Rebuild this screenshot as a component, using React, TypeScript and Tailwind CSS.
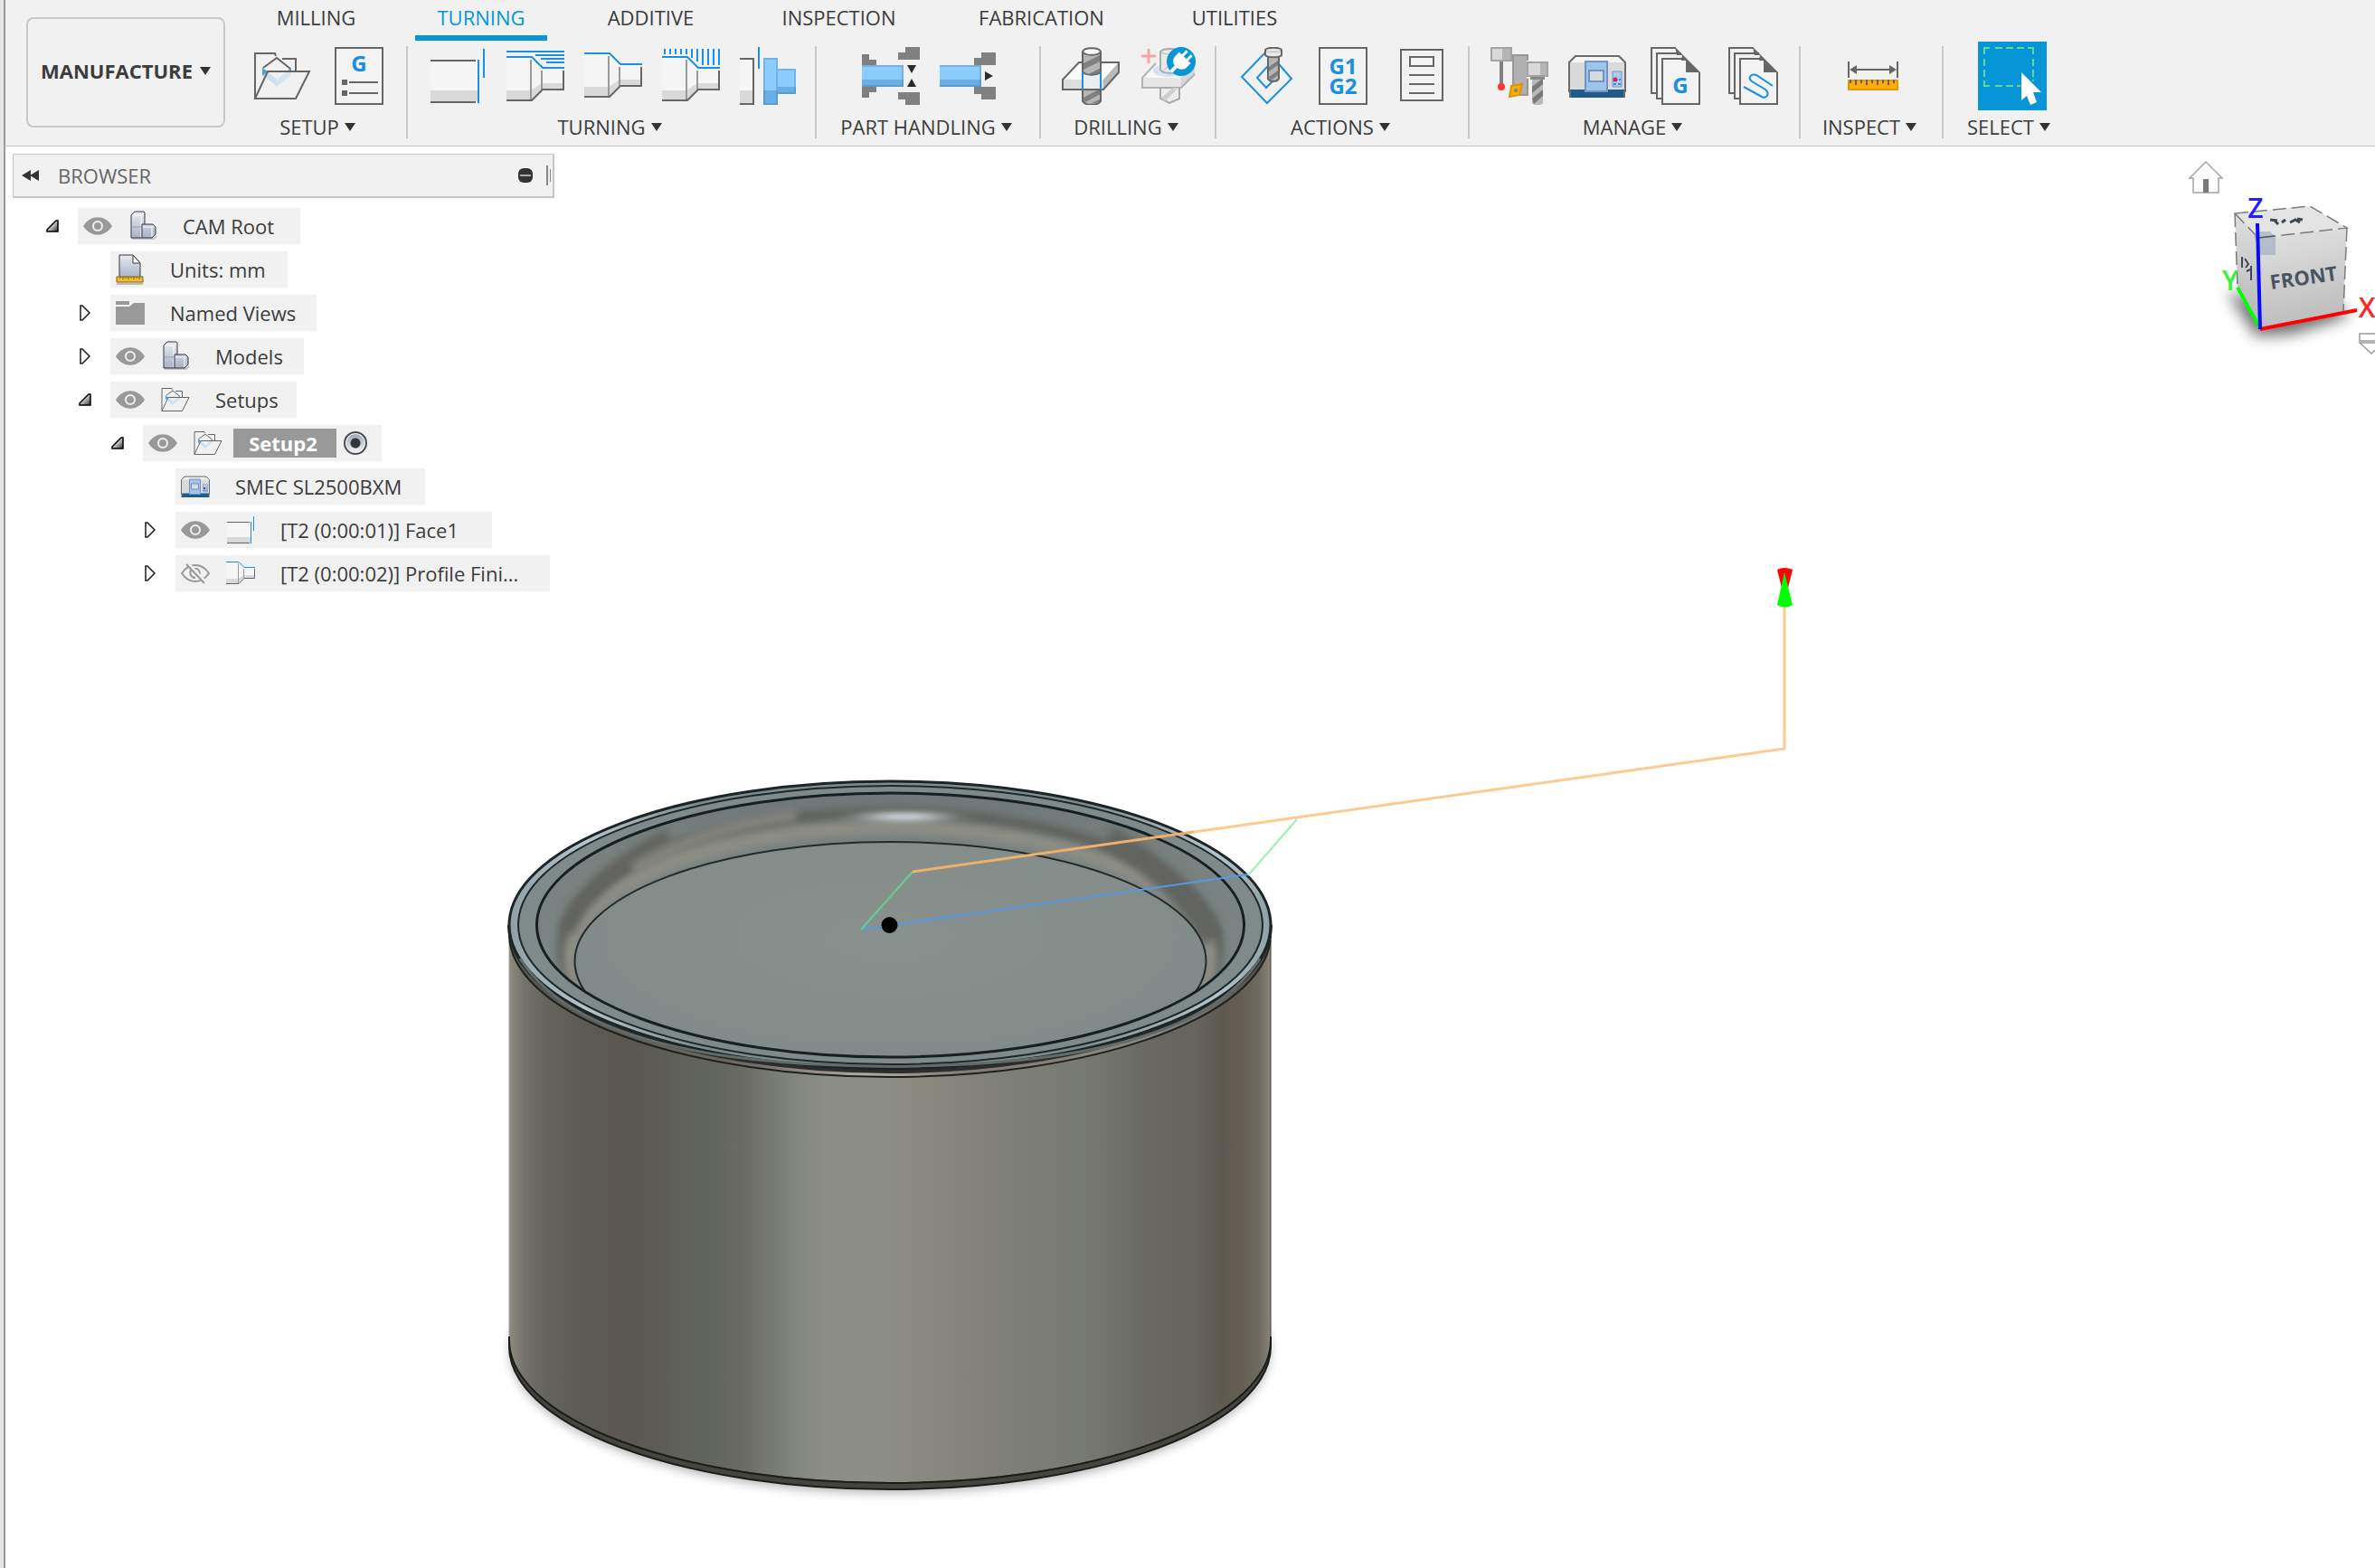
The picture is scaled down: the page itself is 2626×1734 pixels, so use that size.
import { ReactNode, useState } from 'react';
import clsx from 'clsx';

const tabs = [
  { name: 'MILLING', width: 'w-[135px]' },
  { name: 'TURNING', width: 'w-[146px]' },
  { name: 'ADDITIVE', width: 'w-[145px]' },
  { name: 'INSPECTION', width: 'w-[187px]' },
  { name: 'FABRICATION', width: 'w-[177px]' },
  { name: 'UTILITIES', width: 'w-[166px]' },
];

const LINE = '#666666';
const BLUE = '#1a8fe6';

function Icon({ children }: { children: ReactNode }) {
  return (
    <svg viewBox="0 0 64 64" className="size-full" fill="none" aria-hidden="true">
      {children}
    </svg>
  );
}

function SetupIcon() {
  return (
    <Icon>
      <path d="M10 23l6 4-3 6-3-2z" fill="#4a9fdc" />
      <path d="M37 27l5-4v5z" fill="#4a9fdc" />
      <path d="M11 31l5-4 10 9v8z" fill="#cde0f0" />
      <path d="M26 36l11-9h5v4L26 44z" fill="#d6e4f0" />
      <path
        d="M25 10l-1-3H2v50M32 13h15v14M11 23l15-11 15 12M16 27h46L47 57H2z"
        stroke={LINE}
        strokeWidth="2"
      />
    </Icon>
  );
}

function ProgramIcon() {
  return (
    <Icon>
      <rect x="5" y="1" width="52" height="62" fill="#f3f3f3" stroke={LINE} strokeWidth="2" />
      <text
        x="31"
        y="27"
        textAnchor="middle"
        fontSize="24"
        fontWeight="700"
        fontFamily="Open Sans"
        fill={BLUE}
      >
        G
      </text>
      <path d="M12 36h6v6h-6zM12 48h6v6h-6z" fill={LINE} />
      <path d="M20 39h32M20 51h32" stroke={LINE} strokeWidth="2" />
    </Icon>
  );
}

function FaceIcon() {
  return (
    <Icon>
      <path d="M2 15h52v33H2z" fill="#f5f5f5" />
      <path d="M2 48h52v12H2z" fill="#d9d9d9" />
      <path d="M2 15h50M2 61h50" stroke={LINE} strokeWidth="2" />
      <path d="M55 14v48M61 2v32" stroke={BLUE} strokeWidth="2" />
    </Icon>
  );
}

function ProfileShape() {
  return (
    <>
      <path d="M0 11h28l12 12h22v17H40l-12 8H0z" fill="#f5f5f5" />
      <path d="M0 48h27l12-8h23v6H40L28 58H0z" fill="#d9d9d9" />
      <path d="M27 14v44M39 26v21" stroke="#999999" strokeWidth="2" />
      <path d="M0 59h28l12-12h23V26" stroke={LINE} strokeWidth="2" />
      <path d="M0 11h28l12 12h24" stroke={BLUE} strokeWidth="2" />
    </>
  );
}

function RoughingIcon() {
  return (
    <Icon>
      <ProfileShape />
      <path d="M0 5h64M32 9h32M38 13h26M44 17h20" stroke={BLUE} strokeWidth="2" />
    </Icon>
  );
}

function FinishingIcon() {
  return (
    <Icon>
      <g transform="translate(0 -4)">
        <ProfileShape />
      </g>
    </Icon>
  );
}

function GrooveIcon() {
  return (
    <Icon>
      <ProfileShape />
      <path
        d="M3 2v6M9 2v6M15 2v6M21 2v6M27 2v6M33 2v10M39 2v14M45 2v18M51 2v18M57 2v18M63 2v18"
        stroke={BLUE}
        strokeWidth="2"
      />
    </Icon>
  );
}

function PartIcon() {
  return (
    <Icon>
      <path d="M0 13h15v35H0z" fill="#f5f5f5" />
      <path d="M0 48h15v14H0z" fill="#d9d9d9" />
      <path d="M0 13h15v50H0" stroke={LINE} strokeWidth="2" />
      <path d="M21 0v24" stroke={BLUE} strokeWidth="2" />
      <path d="M27 13h14v50H27zM41 25h20v26H41z" fill="#8accfc" stroke="#74b2e2" strokeWidth="2" />
      <path d="M27 48h14v15H27zM41 44h20v7H41z" fill="#69aee4" />
      <path d="M27 48v15h14V48M41 51h20v-7" stroke="#5a9dd1" strokeWidth="2" />
    </Icon>
  );
}

function StockBar() {
  return (
    <>
      <path d="M0 20h46v24H0z" fill="#8accfc" />
      <path d="M0 36h46v8H0z" fill="#69aee4" />
      <path d="M0 21h45v15" stroke="#74b2e2" strokeWidth="2" />
      <path d="M0 43h45v-7" stroke="#5a9dd1" strokeWidth="2" />
    </>
  );
}

function TransferIcon() {
  return (
    <Icon>
      <StockBar />
      <path
        d="M0 8h8v6h8v6H0zM0 44h16v6H8v6H0zM48 0h16v14H40V6h8zM40 50h24v14H48v-6h-8z"
        fill="#808080"
      />
      <path d="M50 20h10l-5 9zM50 44h10l-5-9z" fill="#2b2b2b" />
    </Icon>
  );
}

function BarPullIcon() {
  return (
    <Icon>
      <StockBar />
      <path d="M46 6h16v14H38v-8h8zM38 44h24v14H46v-6h-8z" fill="#808080" />
      <path d="M50 27v10l9-5z" fill="#2b2b2b" />
    </Icon>
  );
}

function DrillIcon() {
  return (
    <Icon>
      <path d="M1 36l18-19h44L46 36z" fill="#fafafa" />
      <path d="M1 36h45v11H1z" fill="#dddddd" />
      <path d="M46 36l17-19v11L46 47z" fill="#b9b9b9" />
      <path d="M1 36l18-19h44v11L46 47H1z" stroke={LINE} strokeWidth="2" />
      <path d="M24 28h19v19H24z" fill="#e9eef2" />
      <path d="M23 4v23c2 5 18 5 20 0V4z" fill="#b5b5b5" />
      <path d="M24 18l18-9v7l-18 9zM30 30l13-7v5l-5 3z" fill="#808080" />
      <ellipse cx="33" cy="5" rx="10" ry="4" fill="#fafafa" />
      <path d="M23 5v22c2 5 18 5 20 0V5c-2-5-18-5-20 0c2 5 18 5 20 0" stroke={LINE} strokeWidth="2" />
      <path d="M23 47v13c2 5 18 5 20 0V47z" fill="#b5b5b5" />
      <path d="M24 56l15-8h4v4L24 62zM32 63l11-6v4z" fill="#808080" />
      <path d="M23 47v13c2 5 18 5 20 0V47z" stroke={LINE} strokeWidth="2" />
      <path d="M23 28v19M43 28v19" stroke={BLUE} strokeWidth="2" />
    </Icon>
  );
}

function HoleRecognitionIcon() {
  return (
    <Icon>
      <path d="M2 10h16M10 2v16" stroke="#f2a5a8" strokeWidth="3" />
      <path d="M3 34l15-16h43L46 34z" fill="#f7f7f7" />
      <ellipse cx="31" cy="26" rx="16" ry="7" fill="#d3e3f5" />
      <path d="M3 34h43v11H3z" fill="#e6e6e6" />
      <path d="M46 34l15-16v12L46 45z" fill="#d5d5d5" />
      <path d="M18 18L3 34v11h43l15-15" stroke="#b0b3b6" strokeWidth="2" />
      <path d="M23 5v20c2 5 18 5 21 0V5c-2-4-18-4-21 0z" fill="#e9e9e9" stroke="#a8abae" strokeWidth="2" />
      <path d="M23 5c3 4 18 4 21 0M25 27l17-14" stroke="#b0b3b6" />
      <path d="M23 45v12l10 5 11-5V45z" fill="#ececec" stroke="#a8abae" strokeWidth="2" />
      <path d="M24 56l13-11h6L28 60z" fill="#cfcfcf" />
      <circle cx="46" cy="16" r="16" fill="#0696d7" />
      <g transform="rotate(45 46 16)" fill="#ffffff">
        <path d="M41 3h3v8h-3zM48 3h3v8h-3zM37 10h18v6c0 5-4 8-7 8v8h-4v-8c-3 0-7-3-7-8z" />
      </g>
    </Icon>
  );
}

function SimulateIcon() {
  return (
    <Icon>
      <path d="M33 4L5 33l28 29 27-27z" stroke={BLUE} strokeWidth="2" />
      <path d="M33 22L22 34l10 11 12-12z" stroke={BLUE} strokeWidth="2" />
      <path d="M34 10h12v25c-2 4-10 4-12 0z" fill="#b5b5b5" />
      <path d="M35 22l10-7v5l-10 7zM35 33l10-7v5l-8 6z" fill="#808080" />
      <path d="M34 10v25c2 4 10 4 12 0V10" stroke={LINE} strokeWidth="2" />
      <path d="M31 3c2-3 16-3 18 0v6c-2 3-16 3-18 0z" fill="#e8e8e8" stroke={LINE} strokeWidth="2" />
      <path d="M32 4c3 2 13 2 16 0" stroke="#b5b5b5" />
    </Icon>
  );
}

function PostProcessIcon() {
  return (
    <Icon>
      <rect x="5" y="1" width="52" height="62" fill="#f3f3f3" stroke={LINE} strokeWidth="2" />
      <text fontSize="24" fontWeight="700" fontFamily="Open Sans" fill={BLUE} textAnchor="middle">
        <tspan x="31" y="30">
          G1
        </tspan>
        <tspan x="31" y="52">
          G2
        </tspan>
      </text>
    </Icon>
  );
}

function SetupSheetIcon() {
  return (
    <Icon>
      <rect x="9" y="3" width="46" height="56" fill="#f3f3f3" stroke={LINE} strokeWidth="2" />
      <path d="M19 11h26v10H19zM18 31h28M18 41h28M18 51h28" stroke={LINE} strokeWidth="2" />
    </Icon>
  );
}

function ToolLibraryIcon() {
  return (
    <Icon>
      <path d="M25 9h16v44H25z" fill="#b0b0b0" stroke="#989898" strokeWidth="2" />
      <path d="M1 1h22v14H1z" fill="#d9d9d9" />
      <path d="M13 1h10v14H13z" fill="#b5b5b5" />
      <path d="M1 1h22v14H1z" stroke="#a3a3a3" strokeWidth="2" />
      <path d="M12 16v26" stroke="#808080" strokeWidth="4" />
      <circle cx="12" cy="44" r="4" fill="#fb3434" />
      <path d="M23 43l12-2-3 12-11 2z" fill="#ffab0a" stroke="#e09500" strokeWidth="2" />
      <circle cx="28" cy="48" r="2" fill="#80807a" />
      <path d="M40 15h24v20H40z" fill="#f1f1f1" />
      <path d="M41 17h22v15H41z" fill="#d9d9d9" />
      <path d="M55 17h8v15h-8z" fill="#b5b5b5" />
      <path d="M41 17h22v15H41z" stroke="#a3a3a3" strokeWidth="2" />
      <path d="M44 33h16v3H44z" fill="#8a8a8a" />
      <path d="M46 36h12v26c-2 3-10 3-12 0z" fill="#b8b8b8" />
      <path d="M46 44l10-8h2v5l-12 10zM46 57l12-10v7l-10 9z" fill="#7a7a7a" />
    </Icon>
  );
}

function MachineIcon() {
  return (
    <Icon>
      <path d="M1 49V17l7-7h48l7 7v32z" fill="#d9dadb" />
      <path d="M2 17l7-6h46l7 6z" fill="#f4f4f4" />
      <path d="M2 47h60v9H2z" fill="#1f5b8b" />
      <path d="M2 56V49H1V17l7-7h48l7 7v32h-1v7" stroke="#6b6b6b" strokeWidth="2" />
      <path d="M19 16h24v33H19z" fill="#9cc4ec" stroke="#7494c0" strokeWidth="2" />
      <path d="M23 26h16v12H23z" fill="#d9dadb" stroke="#7494c0" strokeWidth="2" />
      <path d="M49 27h10v17H49z" fill="#a8cdf0" stroke="#7494c0" strokeWidth="1" />
      <circle cx="52" cy="36" r="2.5" fill="#d81b60" />
      <path d="M56 35h2v2h-2zM50 40h3v2h-3zM55 40h3v2h-3z" fill="#2b8ce6" />
    </Icon>
  );
}

function PageStack({ children }: { children: ReactNode }) {
  return (
    <Icon>
      <path d="M11 51H6V1h27M17 57h-5V7h27" stroke={LINE} strokeWidth="2" />
      <path d="M18 13h27l14 15v35H18z" fill="#f3f3f3" />
      <path d="M44 13H18v50h41V28" stroke={LINE} strokeWidth="2" />
      <path d="M32 0l28 28H44V15h-5l1-6h-6z" fill={LINE} />
      {children}
    </Icon>
  );
}

function PostLibraryIcon() {
  return (
    <PageStack>
      <text
        x="38"
        y="51"
        textAnchor="middle"
        fontSize="24"
        fontWeight="700"
        fontFamily="Open Sans"
        fill={BLUE}
      >
        G
      </text>
    </PageStack>
  );
}

function TemplateLibraryIcon() {
  return (
    <PageStack>
      <path
        d="M22 44l20 11c6 3 9-4 4-8l-15-9c-5-4-1-9 5-7l18 12"
        stroke={BLUE}
        strokeWidth="2"
      />
    </PageStack>
  );
}

function MeasureIcon() {
  return (
    <Icon>
      <path d="M5 16v18M59 16v18M10 25h44" stroke={LINE} strokeWidth="2" />
      <path d="M6 25l8-5v10zM58 25l-8-5v10z" fill={LINE} />
      <path d="M5 37h54v10H5z" fill="#ffab0a" stroke="#e69a00" strokeWidth="2" />
      <path
        d="M7 36v4M13 36v6M19 36v4M25 36v6M31 36v4M37 36v6M43 36v4M49 36v6M55 36v4"
        stroke={LINE}
        strokeWidth="2"
      />
    </Icon>
  );
}

function SelectIcon() {
  return (
    <Icon>
      <path
        d="M1 8V1h6M13 1h8M25 1h8M37 1h8M49 1h6v7M55 13v8M55 25v8M1 13v8M1 25v8M1 37v6h6M13 43h8M25 43h8M37 43h4M55 36v2"
        stroke="#62d990"
        strokeWidth="2"
      />
      <path d="M42 28l22 22h-9l4 11-7 3-4-10-6 5z" fill="#ffffff" />
    </Icon>
  );
}

const groups = [
  {
    name: 'SETUP',
    box: 'pl-2',
    tools: [
      { name: 'New Setup', icon: <SetupIcon /> },
      { name: 'NC Program', icon: <ProgramIcon /> },
    ],
  },
  {
    name: 'TURNING',
    box: '',
    tools: [
      { name: 'Turning Face', icon: <FaceIcon /> },
      { name: 'Profile Roughing', icon: <RoughingIcon /> },
      { name: 'Profile Finishing', icon: <FinishingIcon /> },
      { name: 'Turning Groove', icon: <GrooveIcon /> },
      { name: 'Turning Part', icon: <PartIcon /> },
    ],
  },
  {
    name: 'PART HANDLING',
    box: 'min-w-[248px]',
    tools: [
      { name: 'Stock Transfer', icon: <TransferIcon /> },
      { name: 'Bar Pull', icon: <BarPullIcon /> },
    ],
  },
  {
    name: 'DRILLING',
    box: '',
    tools: [
      { name: 'Drill', icon: <DrillIcon /> },
      { name: 'Hole Recognition', icon: <HoleRecognitionIcon /> },
    ],
  },
  {
    name: 'ACTIONS',
    box: '',
    tools: [
      { name: 'Simulate', icon: <SimulateIcon /> },
      { name: 'Post Process', icon: <PostProcessIcon /> },
      { name: 'Setup Sheet', icon: <SetupSheetIcon /> },
    ],
  },
  {
    name: 'MANAGE',
    box: '',
    tools: [
      { name: 'Tool Library', icon: <ToolLibraryIcon /> },
      { name: 'Machine Library', icon: <MachineIcon /> },
      { name: 'Post Library', icon: <PostLibraryIcon /> },
      { name: 'Template Library', icon: <TemplateLibraryIcon /> },
    ],
  },
  {
    name: 'INSPECT',
    box: 'min-w-[158px]',
    tools: [{ name: 'Measure', icon: <MeasureIcon /> }],
  },
  {
    name: 'SELECT',
    box: 'min-w-[148px]',
    tools: [{ name: 'Select', icon: <SelectIcon />, active: true }],
  },
];

function Caret() {
  return (
    <svg viewBox="0 0 12 9" className="h-[9px] w-3" aria-hidden="true">
      <path d="M0 0h12L6 9z" fill="#333333" />
    </svg>
  );
}

function Eye() {
  return (
    <svg viewBox="0 0 32 32" className="size-8" fill="none">
      <path d="M0 16c8-13 24-13 32 0c-8 13-24 13-32 0z" fill="#999999" />
      <circle cx="16" cy="16" r="5" stroke="#f1f1f1" strokeWidth="2" />
    </svg>
  );
}

function EyeOff() {
  return (
    <svg viewBox="0 0 32 32" className="size-8" fill="none" stroke="#999999" strokeWidth="2">
      <path d="M1 16c8-12 22-12 30 0c-8 12-22 12-30 0z" />
      <path d="M11 12c-2 5 1 9 5 9M15 11c5-1 7 4 5 8M15 14c3 0 4 2 3 4" />
      <path d="M8 5l20 21" stroke="#f1f1f1" strokeWidth="3" />
      <path d="M6 6l20 21" />
    </svg>
  );
}

function ComponentIcon() {
  return (
    <svg viewBox="-2 0 32 36" className="h-9 w-8">
      <defs>
        <linearGradient id="block" x1="0" y1="0" x2="0" y2="1">
          <stop offset="0" stopColor="#e9ebf0" />
          <stop offset="1" stopColor="#a9b2c6" />
        </linearGradient>
      </defs>
      <path d="M2 32h24l3-3" fill="none" stroke="#c5c5c5" strokeWidth="2" />
      <path d="M1 6l4-4h10l1 1v13h9l3 3v7l-4 5H1z" fill="url(#block)" />
      <path d="M1 6h11v25M5 2L1 6M12 6l4-3M1 19h11M13 19h11v11M24 19l4-3" fill="none" stroke="#ffffff" />
      <path d="M1 6l4-4h10l1 1v13h-3v15M16 16h9l3 3v8l-4 4H1V6" fill="none" stroke="#35383e" />
      <path d="M1 19h12" stroke="#7d8494" />
    </svg>
  );
}

function UnitsIcon() {
  return (
    <svg viewBox="0 0 32 36" className="h-9 w-8">
      <path d="M4 2h15l8 9v16H4z" fill="url(#block)" />
      <path d="M4 27V2h15l8 9v16" fill="none" stroke="#35383e" />
      <path d="M19 2v9h8z" fill="#ffffff" stroke="#35383e" />
      <path d="M1 34h29" stroke="#bcbcbc" strokeWidth="2" />
      <path d="M1 26h29v6H1z" fill="#edc02f" stroke="#8c5a12" />
      <path d="M5 26v2M8 26v3M11 26v2M14 26v3M17 26v2M20 26v3M23 26v2M26 26v3" stroke="#8c5a12" />
    </svg>
  );
}

function FolderIcon() {
  return (
    <svg viewBox="0 0 32 32" className="size-8" fill="#999999">
      <path d="M0 3h15v4H0zM0 9h15l5-4h12v24H0z" />
    </svg>
  );
}

function SmallIcon({ children }: { children: ReactNode }) {
  return <span className="block size-8">{children}</span>;
}

interface TreeNode {
  name: string;
  indent: string;
  width: string;
  toggle?: 'open' | 'closed';
  eye?: 'on' | 'off';
  icon: ReactNode;
  active?: boolean;
}

const tree: TreeNode[] = [
  { name: 'CAM Root', indent: 'pl-[45px]', width: 'min-w-[246px]', toggle: 'open', eye: 'on', icon: <ComponentIcon /> },
  { name: 'Units: mm', indent: 'pl-[81px]', width: 'min-w-[196px]', icon: <UnitsIcon /> },
  { name: 'Named Views', indent: 'pl-[81px]', width: 'min-w-[228px]', toggle: 'closed', icon: <FolderIcon /> },
  { name: 'Models', indent: 'pl-[81px]', width: 'min-w-[214px]', toggle: 'closed', eye: 'on', icon: <ComponentIcon /> },
  { name: 'Setups', indent: 'pl-[81px]', width: 'min-w-[206px]', toggle: 'open', eye: 'on', icon: <SmallIcon><SetupIcon /></SmallIcon> },
  { name: 'Setup2', indent: 'pl-[117px]', width: 'min-w-[264px]', toggle: 'open', eye: 'on', icon: <SmallIcon><SetupIcon /></SmallIcon>, active: true },
  { name: 'SMEC SL2500BXM', indent: 'pl-[153px]', width: 'min-w-[276px]', icon: <SmallIcon><MachineIcon /></SmallIcon> },
  { name: '[T2 (0:00:01)] Face1', indent: 'pl-[153px]', width: 'min-w-[350px]', toggle: 'closed', eye: 'on', icon: <SmallIcon><FaceIcon /></SmallIcon> },
  { name: '[T2 (0:00:02)] Profile Fini...', indent: 'pl-[153px]', width: 'min-w-[414px]', toggle: 'closed', eye: 'off', icon: <SmallIcon><FinishingIcon /></SmallIcon> },
];

function Toggle({ state, name }: { state?: 'open' | 'closed'; name: string }) {
  if (!state) {
    return <span className="w-3.5" />;
  }
  return (
    <button aria-label={`Toggle ${name}`} className="w-3.5">
      {state === 'open' ? (
        <svg viewBox="0 0 14 14" className="size-3.5">
          <defs>
            <linearGradient id="corner" x1="0" y1="0" x2="1" y2="1">
              <stop offset="0.3" stopColor="#ffffff" />
              <stop offset="1" stopColor="#2a2a2a" />
            </linearGradient>
          </defs>
          <path d="M1 13V11L11 1h2v12z" fill="url(#corner)" stroke="#000000" strokeWidth="1.5" />
        </svg>
      ) : (
        <svg viewBox="0 0 14 20" className="h-5 w-3.5">
          <path d="M2 2h2l8 8-8 8H2z" fill="#ffffff" stroke="#1a1a1a" strokeWidth="1.5" />
        </svg>
      )}
    </button>
  );
}

function Browser() {
  return (
    <section className="relative w-[607px] pl-2 pt-2">
      <div className="flex h-[49px] items-center border border-r-2 border-b-2 border-[#c8c8c8] bg-[#f1f1f1] pl-[9px]">
        <button aria-label="Collapse browser">
          <svg viewBox="0 0 20 12" className="h-3 w-5" fill="#333333">
            <path d="M0 6l10-6v12zM9 6l10-6v12z" />
          </svg>
        </button>
        <h2 className="ml-5 grow text-[22px] leading-7 text-[#666]">BROWSER</h2>
        <button aria-label="Browser options" className="flex size-4 items-center justify-center rounded-[6px] bg-[#333]">
          <span className="h-0.5 w-3 bg-[#aaa]" />
        </button>
        <span className="ml-[15px] h-[22px] w-0.5 bg-[#888]" />
        <span className="mr-0.5 ml-0.5 h-3.5 w-px bg-[#888]" />
      </div>
      <ul className="-ml-2 mt-[11px] flex flex-col gap-2 text-[22px] text-[#3c3c3c]">
        {tree.map((node) => (
          <li key={node.name} className={clsx('flex items-center', node.indent)}>
            <Toggle state={node.toggle} name={node.name} />
            <div
              className={clsx(
                'ml-[21px] flex h-10 items-center bg-[#f1f1f1] pl-1.5 whitespace-nowrap',
                node.width,
              )}
            >
              {node.eye && (
                <button aria-label={`Visibility of ${node.name}`} className="mr-[18px]">
                  {node.eye === 'on' ? <Eye /> : <EyeOff />}
                </button>
              )}
              {node.icon}
              {node.active ? (
                <>
                  <label
                    htmlFor="active-setup"
                    className="ml-3 w-[114px] bg-[#999] pr-1 text-center leading-8 font-bold text-white"
                  >
                    {node.name}
                  </label>
                  <input
                    id="active-setup"
                    type="radio"
                    defaultChecked
                    className="ml-2 size-[26px] appearance-none rounded-full border-2 border-[#4a4d54] bg-[radial-gradient(circle,#33363b_0_5px,transparent_6px),linear-gradient(#98a2b8,#f4f6fa)] shadow-[inset_0_0_0_1px_#fff]"
                  />
                </>
              ) : (
                <span className="ml-7">{node.name}</span>
              )}
            </div>
          </li>
        ))}
      </ul>
    </section>
  );
}

function Model() {
  return (
    <svg
      viewBox="6 162 2620 1572"
      preserveAspectRatio="xMinYMin meet"
      className="absolute inset-0 h-full w-full"
      fill="none"
      role="img"
      aria-label="Turned part with toolpath"
    >
      <defs>
        <linearGradient id="side" x1="0" x2="1" y1="0" y2="0">
          <stop offset="0" stopColor="#8f8b80" />
          <stop offset="0.02" stopColor="#74726a" />
          <stop offset="0.05" stopColor="#64635c" />
          <stop offset="0.1" stopColor="#5c5a54" />
          <stop offset="0.14" stopColor="#5c5851" />
          <stop offset="0.17" stopColor="#5a5851" />
          <stop offset="0.22" stopColor="#5f605a" />
          <stop offset="0.27" stopColor="#62655e" />
          <stop offset="0.31" stopColor="#6a6c65" />
          <stop offset="0.35" stopColor="#7a7c76" />
          <stop offset="0.38" stopColor="#848680" />
          <stop offset="0.42" stopColor="#8c8e87" />
          <stop offset="0.49" stopColor="#8d8e87" />
          <stop offset="0.54" stopColor="#8a897f" />
          <stop offset="0.6" stopColor="#84837b" />
          <stop offset="0.66" stopColor="#7e7f77" />
          <stop offset="0.75" stopColor="#777a72" />
          <stop offset="0.81" stopColor="#6e6f68" />
          <stop offset="0.85" stopColor="#686660" />
          <stop offset="0.9" stopColor="#66645e" />
          <stop offset="0.935" stopColor="#5f5a51" />
          <stop offset="0.96" stopColor="#645e54" />
          <stop offset="0.985" stopColor="#6f6a60" />
          <stop offset="1" stopColor="#8a857a" />
        </linearGradient>
        <linearGradient id="chamfer" x1="0" x2="1" y1="0" y2="0">
          <stop offset="0" stopColor="#55544d" />
          <stop offset="0.3" stopColor="#6e675f" />
          <stop offset="0.47" stopColor="#b3aaa2" />
          <stop offset="0.6" stopColor="#837b73" />
          <stop offset="0.85" stopColor="#8d867e" />
          <stop offset="1" stopColor="#4a4843" />
        </linearGradient>
        <linearGradient id="rim" x1="0" x2="1" y1="0" y2="0">
          <stop offset="0" stopColor="#8fa0a6" />
          <stop offset="0.1" stopColor="#b5c4cc" />
          <stop offset="0.25" stopColor="#7f8c8e" />
          <stop offset="0.75" stopColor="#7f8c8e" />
          <stop offset="0.93" stopColor="#b5c4cc" />
          <stop offset="1" stopColor="#8fa0a6" />
        </linearGradient>
        <radialGradient id="floor" cx="0.5" cy="0.4" r="0.6">
          <stop offset="0" stopColor="#88918e" />
          <stop offset="0.7" stopColor="#848d8a" />
          <stop offset="1" stopColor="#7c8787" />
        </radialGradient>
        <linearGradient id="bowl" x1="0" x2="0" y1="877" y2="1169" gradientUnits="userSpaceOnUse">
          <stop offset="0" stopColor="#70767a" />
          <stop offset="0.2" stopColor="#78817f" />
          <stop offset="1" stopColor="#7d8988" />
        </linearGradient>
        <filter id="soft" x="-10%" y="-20%" width="120%" height="140%">
          <feGaussianBlur stdDeviation="5" />
        </filter>
        <filter id="glow" x="-60%" y="-200%" width="220%" height="500%">
          <feGaussianBlur stdDeviation="20 3" />
        </filter>
        <filter id="shadow" x="-5%" y="-5%" width="110%" height="115%">
          <feGaussianBlur stdDeviation="6" />
        </filter>
        <clipPath id="bowl-clip">
          <ellipse cx="984.5" cy="1023" rx="391" ry="146" />
        </clipPath>
      </defs>

      {/* ground shadow and cylinder body */}
      <ellipse cx="984" cy="1494" rx="420" ry="157" fill="#000000" opacity="0.3" filter="url(#shadow)" />
      <path d="M563 1023V1489A421 158 0 0 0 1405 1489V1023z" fill="#45443d" />
      <path d="M563 1023V1482A421 157 0 0 0 1405 1482V1023z" fill="url(#side)" />
      <path d="M563 1482A421 158 0 0 0 1405 1482" stroke="#1b1d1a" strokeWidth="2" />
      <path d="M563 1478V1489A421 158 0 0 0 1405 1489V1478" stroke="#1b1d1a" strokeWidth="2" />
      <path d="M563 1040V1478" stroke="#a8a59c" strokeWidth="1" />
      <path d="M1405 1040V1478" stroke="#3a3833" strokeWidth="1" />

      {/* chamfer, rim and bowl */}
      <path
        d="M563 1023V1033A421 158 0 0 0 1405 1033V1023z"
        fill="url(#chamfer)"
        stroke="#1d211f"
        strokeWidth="2"
      />
      <path d="M563 1023A421 162 0 0 0 1405 1023" stroke="#2b2e2c" strokeWidth="4" />
      <ellipse cx="984" cy="1023" rx="421" ry="159" fill="url(#rim)" stroke="#1c2426" strokeWidth="3" />
      <path d="M575 1060Q650 1179 984 1179T1393 1060" stroke="#626b6a" strokeWidth="3" />
      <ellipse cx="984.5" cy="1023" rx="411.500" ry="154" fill="#7f8b8a" stroke="#1e2729" strokeWidth="2" />
      <ellipse cx="984.5" cy="1023" rx="391" ry="146" fill="url(#bowl)" />
      <g clipPath="url(#bowl-clip)">
        <ellipse cx="984.5" cy="1050" rx="362" ry="151" stroke="#5f615c" strokeWidth="13" filter="url(#soft)" />
        <ellipse cx="984.5" cy="1062" rx="354" ry="147" stroke="#8f8e86" strokeWidth="14" filter="url(#soft)" />
        <path d="M1225 925Q1310 975 1340 1040" stroke="#62645f" strokeWidth="26" filter="url(#soft)" />
        <path d="M625 1030Q650 970 740 925" stroke="#62645f" strokeWidth="18" filter="url(#soft)" />
        <path d="M700 960Q780 915 880 902" stroke="#8c8c85" strokeWidth="10" filter="url(#soft)" />
        <ellipse cx="1000" cy="903" rx="44" ry="5" fill="#d6dee2" filter="url(#glow)" />
        <ellipse cx="984.5" cy="1063" rx="349" ry="132" fill="url(#floor)" stroke="#222b2c" strokeWidth="2" />
      </g>
      <ellipse cx="984.5" cy="1023" rx="391" ry="146" stroke="#162023" strokeWidth="3" />

      {/* toolpath */}
      <path d="M952 1028L1380 967" stroke="#4f9be8" strokeWidth="2" />
      <path d="M952 1028L1009 964" stroke="#66cc94" strokeWidth="2" />
      <path d="M1380 968L1434 906" stroke="#9af0b8" strokeWidth="2" />
      <path d="M1009 964L1320 920" stroke="#eeb06a" strokeWidth="3" />
      <path d="M1320 920L1973 828V668" stroke="#fbcb93" strokeWidth="3" />
      <circle cx="983.500" cy="1023" r="9" fill="#000000" />
      <path d="M1965 630q8-4 17 0l-5 20h-7z" fill="#ff0000" />
      <path d="M1973 633l9 36q-8 5-17 0z" fill="#00ff00" />
    </svg>
  );
}

function ViewCube() {
  return (
    <svg
      viewBox="2406 162 220 250"
      className="absolute top-0 right-0 h-[250px] w-[220px]"
      fill="none"
      role="img"
      aria-label="View cube"
    >
      <defs>
        <linearGradient id="front" x1="0" y1="0" x2="0.2" y2="1">
          <stop offset="0" stopColor="#e3e3e3" />
          <stop offset="1" stopColor="#bdbdbd" />
        </linearGradient>
        <linearGradient id="left" x1="0" y1="0" x2="0" y2="1">
          <stop offset="0" stopColor="#dedede" />
          <stop offset="1" stopColor="#b5b5b5" />
        </linearGradient>
        <filter id="cube-shadow" x="-30%" y="-60%" width="160%" height="220%">
          <feGaussianBlur stdDeviation="8" />
        </filter>
      </defs>
      <path d="M2439 179l-18 18h4v16h28v-16h4z" fill="#ffffff" stroke="#a3a3a3" strokeWidth="1.500" />
      <path d="M2436 198h6v15h-6z" fill="#7a7a7a" />

      <path d="M2462 322l32 50 40-2 64-20-16-16-80 0z" fill="#000000" opacity="0.55" filter="url(#cube-shadow)" />
      <path d="M2471 236l83-8 41 24-98 11z" fill="#e4e4e4" />
      <path d="M2471 236l26 27 3 101-26-46z" fill="url(#left)" />
      <path d="M2497 263l98-11-4 92-91 20z" fill="url(#front)" />
      <path
        d="M2471 236l83-8 41 24-98 11zM2471 236l3 82M2595 252l-4 92"
        stroke="#7b7b7b"
        strokeWidth="1.500"
        strokeDasharray="15 6"
      />
      <path d="M2492 260l8-4h10l6 6v20h-16z" fill="#a3b1c2" opacity="0.7" />
      <path d="M2497 263l18-2" stroke="#555555" strokeWidth="1.500" />
      {/* top and left captions are too foreshortened to read */}
      <path d="M2510 243l8 1M2515 244l4 4M2523 246l4-3M2532 246l6-3 5 3M2540 242l6 1" stroke="#3f4853" strokeWidth="3" />
      <path d="M2479 284v12M2482 286l4 6-3 4M2484 300l4-2M2489 294v16" stroke="#3f4853" strokeWidth="2" />
      <text
        x="2547"
        y="315"
        transform="rotate(-8 2547 307)"
        textAnchor="middle"
        fontSize="22"
        fontWeight="700"
        fontFamily="Open Sans"
        fill="#4a535f"
      >
        FRONT
      </text>
      <path d="M2474 318l25 45" stroke="#00ff00" strokeWidth="4" />
      <path d="M2499 364l107-21" stroke="#ff0000" strokeWidth="4" />
      <path d="M2496 247l3 117" stroke="#0a0af5" strokeWidth="4" />
      <g fontSize="30" fontFamily="Open Sans" fontWeight="600" textAnchor="middle">
        <text x="2494" y="241" fill="#1f1fff">
          Z
        </text>
        <text x="2466" y="321" fill="#33f533">
          Y
        </text>
        <text x="2617" y="351" fill="#ff2626">
          X
        </text>
      </g>
      <path d="M2609 369h26v8h-26zM2609 379l13 12 13-12z" fill="#ffffff" stroke="#9a9a9a" strokeWidth="1.500" />
    </svg>
  );
}

export default function App() {
  const [tab, setTab] = useState('TURNING');

  return (
    <div className="flex min-h-screen flex-col overflow-hidden border-l-4 border-[#e6e6e6] bg-white font-['Open_Sans',sans-serif]">
      <header className="flex border-b border-l-2 border-b-[#c8c8c8] border-l-[#999] bg-[#f1f1f1] text-[22px] text-[#3c3c3c]">
        <button className="mt-[19px] mb-5 ml-[23px] flex h-[122px] w-[220px] shrink-0 items-center justify-center gap-2 rounded-lg border-2 border-[#c8c8c8] pb-1 font-bold">
          MANUFACTURE
          <Caret />
        </button>
        <div>
          <nav className="flex h-[45px] gap-[42px] pl-[33px]">
            {tabs.map(({ name, width }) => (
              <button
                key={name}
                onClick={() => setTab(name)}
                className={clsx(
                  'border-b-[6px] pb-0.5 leading-9',
                  width,
                  tab === name ? 'border-[#0696d7] text-[#0696d7]' : 'border-transparent',
                )}
              >
                {name}
              </button>
            ))}
          </nav>
          <div className="flex pt-1.5">
            {groups.map((group) => (
              <div
                key={group.name}
                className={clsx(
                  'flex flex-col items-center border-r-2 border-[#c8c8c8] pt-px last:border-r-0',
                  group.box,
                )}
              >
                <div className="flex gap-[22px] pr-[19px] pl-[23px]">
                  {group.tools.map((tool) => (
                    <button
                      key={tool.name}
                      aria-label={tool.name}
                      className={clsx(
                        'active' in tool ? '-m-1.5 size-[76px] bg-[#0696d7] p-1.5' : 'size-16',
                      )}
                    >
                      {tool.icon}
                    </button>
                  ))}
                </div>
                <button className="mt-3 mr-1 mb-px flex items-center gap-1.5 leading-6 whitespace-nowrap">
                  {group.name}
                  <Caret />
                </button>
              </div>
            ))}
          </div>
        </div>
      </header>
      <main className="relative grow border-l-2 border-[#999]">
        <Model />
        <ViewCube />
        <Browser />
      </main>
    </div>
  );
}
